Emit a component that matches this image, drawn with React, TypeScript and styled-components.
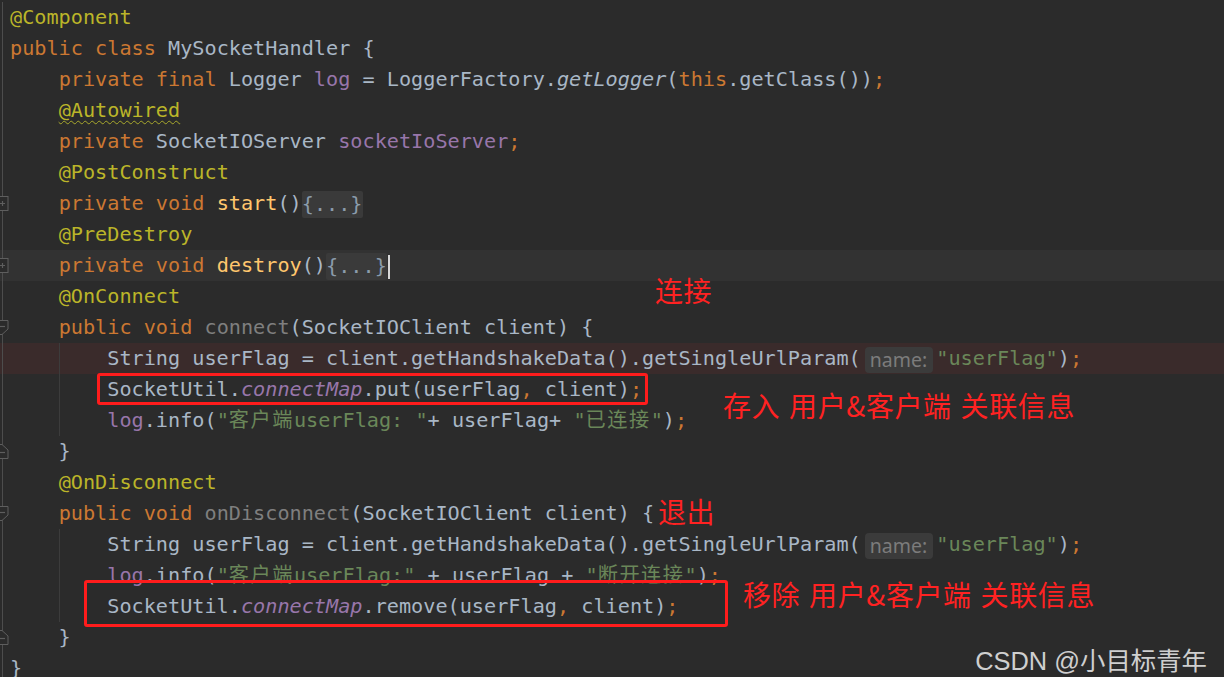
import React from "react";
import styled, { createGlobalStyle, css } from "styled-components";

const Global = createGlobalStyle`
  html, body { margin: 0; padding: 0; background: #2b2b2b; }
  body { width: 1224px; height: 677px; overflow: hidden; }
`;

type Kind =
  | "kw" | "ann" | "annw" | "txt" | "fld" | "sfld" | "smeth" | "str"
  | "decl" | "unused" | "punct" | "fold" | "hint" | "caret";

type Tok = [Kind, string];

interface LineData {
  toks: Tok[];
  bg?: "current" | "error";
  guide?: boolean;
  marker?: "plus" | "start" | "end";
}

const colors: Record<string, string> = {
  kw: "#cc7832",
  ann: "#bbb529",
  annw: "#bbb529",
  txt: "#a9b7c6",
  fld: "#9876aa",
  sfld: "#9876aa",
  smeth: "#a9b7c6",
  str: "#6a8759",
  decl: "#ffc66d",
  unused: "#7f7f7f",
  punct: "#cc7832",
  fold: "#8b9cac",
};

const Editor = styled.div`
  position: relative;
  display: flex;
  flex-direction: column;
  width: 1224px;
  height: 677px;
  padding-top: 2px;
  box-sizing: border-box;
  background: #2b2b2b;
  font-family: "DejaVu Sans Mono", "Noto Sans CJK SC", monospace;
  font-size: 20.2px;
  overflow: hidden;
`;

const Row = styled.div<{ $bg?: string }>`
  display: flex;
  flex: none;
  height: 31px;
  align-items: center;
  ${(p) => p.$bg === "current" && css`background: #323232;`}
  ${(p) => p.$bg === "error" && css`background: #3a2b2b;`}
`;

const GutterCell = styled.div`
  position: relative;
  width: 10px;
  height: 31px;
  flex: none;
  &::before {
    content: "";
    position: absolute;
    left: 2px;
    top: 0;
    bottom: 0;
    width: 1px;
    background: #4d4d4d;
  }
  svg { position: absolute; left: 0; top: 7px; }
`;

const Code = styled.div<{ $guide?: boolean }>`
  flex: 1;
  height: 31px;
  line-height: 31px;
  white-space: pre;
  color: #a9b7c6;
  ${(p) =>
    p.$guide &&
    css`
      background-image: linear-gradient(#3c3c3c, #3c3c3c);
      background-size: 1px 100%;
      background-position: 49px 0;
      background-repeat: no-repeat;
    `}
`;

const Token = styled.span<{ $k: Kind }>`
  color: ${(p) => colors[p.$k] || "#a9b7c6"};
  ${(p) => (p.$k === "sfld" || p.$k === "smeth") && css`font-style: italic;`}
  ${(p) =>
    p.$k === "annw" &&
    css`
      text-decoration: underline wavy #a8a82c;
      text-decoration-thickness: 1px;
      text-underline-offset: 3px;
    `}
  ${(p) =>
    p.$k === "fold" &&
    css`
      display: inline-block;
      background: #3a3a3a;
      line-height: 27px;
      vertical-align: middle;
      border-radius: 2px;
    `}
`;

const Cjk = styled.span`
  letter-spacing: 1.5px;
`;

const Hint = styled.span`
  display: inline-block;
  vertical-align: middle;
  height: 26px;
  line-height: 26px;
  margin: 0 3px 0 4px;
  padding: 0 6px 0 5px;
  border-radius: 4px;
  background: #3b3b3b;
  color: #7c7c7c;
  font-family: "Noto Sans", "Open Sans", sans-serif;
  font-size: 19.5px;
`;

const Caret = styled.span`
  display: inline-block;
  width: 2px;
  height: 24px;
  margin-left: 1px;
  vertical-align: middle;
  background: #d8d8d8;
`;

const Box = styled.div<{ $x: number; $y: number; $w: number; $h: number }>`
  position: absolute;
  left: ${(p) => p.$x}px;
  top: ${(p) => p.$y}px;
  width: ${(p) => p.$w}px;
  height: ${(p) => p.$h}px;
  box-sizing: border-box;
  border: 3px solid #ff1c1c;
  border-radius: 3px;
`;

const Note = styled.div<{ $x: number; $y: number }>`
  position: absolute;
  left: ${(p) => p.$x}px;
  top: ${(p) => p.$y}px;
  color: #ff2222;
  font-family: "Noto Sans CJK SC", "Liberation Sans", sans-serif;
  font-size: 28px;
  line-height: 1;
  letter-spacing: 0.6px;
  word-spacing: 2px;
  white-space: pre;
`;

const Watermark = styled.div`
  position: absolute;
  right: 17px;
  bottom: 3px;
  color: #cfcfcf;
  font-family: "Liberation Sans", "Noto Sans CJK SC", sans-serif;
  font-size: 25.4px;
  line-height: 1;
  white-space: pre;
`;

const FoldMarker: React.FC<{ type: "plus" | "start" | "end" }> = ({ type }) => {
  const stroke = "#5e5e5e";
  if (type === "plus")
    return (
      <svg width="10" height="17" viewBox="0 0 10 17">
        <rect x="-4" y="1.5" width="12" height="14" fill="#2b2b2b" stroke={stroke} />
        <path d="M0 8.5 H5 M2.5 6 V11" stroke={stroke} strokeWidth="1.2" />
      </svg>
    );
  if (type === "start")
    return (
      <svg width="10" height="17" viewBox="0 0 10 17">
        <path d="M-4 1.5 H8 V10 L2 15.5 H-4 Z" fill="#2b2b2b" stroke={stroke} />
        <path d="M0 7.5 H5" stroke={stroke} strokeWidth="1.2" />
      </svg>
    );
  return (
    <svg width="10" height="17" viewBox="0 0 10 17">
      <path d="M-4 15.5 H8 V7 L2 1.5 H-4 Z" fill="#2b2b2b" stroke={stroke} />
      <path d="M0 9.5 H5" stroke={stroke} strokeWidth="1.2" />
    </svg>
  );
};

const I4 = "    ";
const I8 = "        ";

const handshake = (): Tok[] => [
  ["txt", I8 + "String userFlag = client.getHandshakeData().getSingleUrlParam("],
  ["hint", "name:"],
  ["str", '"userFlag"'],
  ["txt", ")"],
  ["punct", ";"],
];

const lines: LineData[] = [
  { toks: [["ann", "@Component"]] },
  { toks: [["kw", "public class "], ["txt", "MySocketHandler {"]] },
  {
    toks: [
      ["txt", I4], ["kw", "private final "], ["txt", "Logger "], ["fld", "log"],
      ["txt", " = LoggerFactory."], ["smeth", "getLogger"], ["txt", "("], ["kw", "this"],
      ["txt", ".getClass())"], ["punct", ";"],
    ],
  },
  { toks: [["txt", I4], ["annw", "@Autowired"]] },
  {
    toks: [["txt", I4], ["kw", "private "], ["txt", "SocketIOServer "], ["fld", "socketIoServer"], ["punct", ";"]],
  },
  { toks: [["txt", I4], ["ann", "@PostConstruct"]] },
  {
    marker: "plus",
    toks: [["txt", I4], ["kw", "private void "], ["decl", "start"], ["txt", "()"], ["fold", "{...}"]],
  },
  { toks: [["txt", I4], ["ann", "@PreDestroy"]] },
  {
    marker: "plus",
    bg: "current",
    toks: [["txt", I4], ["kw", "private void "], ["decl", "destroy"], ["txt", "()"], ["fold", "{...}"], ["caret", ""]],
  },
  { toks: [["txt", I4], ["ann", "@OnConnect"]] },
  {
    marker: "start",
    toks: [["txt", I4], ["kw", "public void "], ["unused", "connect"], ["txt", "(SocketIOClient client) {"]],
  },
  { bg: "error", guide: true, toks: handshake() },
  {
    guide: true,
    toks: [
      ["txt", I8 + "SocketUtil."], ["sfld", "connectMap"], ["txt", ".put(userFlag"], ["punct", ","],
      ["txt", " client)"], ["punct", ";"],
    ],
  },
  {
    guide: true,
    toks: [
      ["txt", I8], ["fld", "log"], ["txt", ".info("], ["str", '"客户端userFlag: "'],
      ["txt", "+ userFlag+ "], ["str", '"已连接"'], ["txt", ")"], ["punct", ";"],
    ],
  },
  { marker: "end", toks: [["txt", I4 + "}"]] },
  { toks: [["txt", I4], ["ann", "@OnDisconnect"]] },
  {
    marker: "start",
    toks: [["txt", I4], ["kw", "public void "], ["unused", "onDisconnect"], ["txt", "(SocketIOClient client) {"]],
  },
  { guide: true, toks: handshake() },
  {
    guide: true,
    toks: [
      ["txt", I8], ["fld", "log"], ["txt", ".info("], ["str", '"客户端userFlag:"'],
      ["txt", " + userFlag + "], ["str", '"断开连接"'], ["txt", ")"], ["punct", ";"],
    ],
  },
  {
    guide: true,
    toks: [
      ["txt", I8 + "SocketUtil."], ["sfld", "connectMap"], ["txt", ".remove(userFlag"], ["punct", ","],
      ["txt", " client)"], ["punct", ";"],
    ],
  },
  { marker: "end", toks: [["txt", I4 + "}"]] },
  { toks: [["txt", "}"]] },
];

const splitCjk = (t: string) =>
  t.split(/([\u4e00-\u9fff]+)/).map((part, j) =>
    /[\u4e00-\u9fff]/.test(part) ? <Cjk key={j}>{part}</Cjk> : part
  );

const renderTok = ([k, t]: Tok, i: number) => {
  if (k === "hint") return <Hint key={i}>{t}</Hint>;
  if (k === "caret") return <Caret key={i} />;
  return (
    <Token key={i} $k={k}>
      {splitCjk(t)}
    </Token>
  );
};

export default function App() {
  return (
    <>
      <Global />
      <Editor>
        {lines.map((l, i) => (
          <Row key={i} $bg={l.bg}>
            <GutterCell>{l.marker && <FoldMarker type={l.marker} />}</GutterCell>
            <Code $guide={l.guide}>{l.toks.map(renderTok)}</Code>
          </Row>
        ))}
        <Box $x={97} $y={373} $w={551} $h={32} />
        <Box $x={84} $y={580} $w={644} $h={47} />
        <Note $x={655} $y={276}>连接</Note>
        <Note $x={723} $y={391}>存入 用户&amp;客户端 关联信息</Note>
        <Note $x={658} $y={497}>退出</Note>
        <Note $x={743} $y={580}>移除 用户&amp;客户端 关联信息</Note>
        <Watermark>CSDN @小目标青年</Watermark>
      </Editor>
    </>
  );
}
